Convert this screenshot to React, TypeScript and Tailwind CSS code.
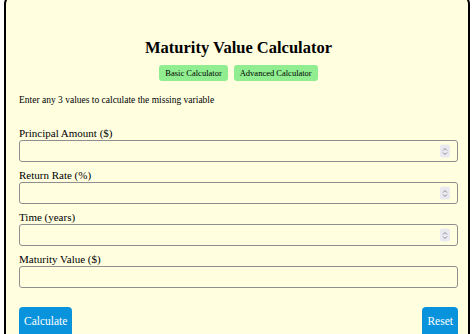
import React from 'react';

function Spinner() {
  return (
    <span className="pointer-events-none absolute right-[8px] top-1/2 flex h-[13px] w-[10px] -translate-y-1/2 items-center justify-center rounded-[2px] bg-[#e9e9ef]">
      <svg width="6" height="10" viewBox="0 0 6 10" fill="none" stroke="#8a8a94" strokeWidth="1">
        <path d="M1 4 L3 2 L5 4" />
        <path d="M1 6 L3 8 L5 6" />
      </svg>
    </span>
  );
}

function Field({ label, spinner = true }: { label: string; spinner?: boolean }) {
  return (
    <div className="flex flex-col">
      <label className="text-[11px] leading-[12px] text-black">{label}</label>
      <div className="relative mt-[1px]">
        <input
          type="text"
          className="block h-[22px] w-full rounded-[3px] border-[1.5px] border-[#8f8f8f] bg-transparent px-2 font-['Liberation_Serif',serif] text-[11px] outline-none"
        />
        {spinner && <Spinner />}
      </div>
    </div>
  );
}

function Pill({ children }: { children: React.ReactNode }) {
  return (
    <button className="h-[16px] rounded-[3px] bg-[#90ee90] px-[6px] font-['Liberation_Serif',serif] text-[8.5px] leading-[16px] text-black">
      {children}
    </button>
  );
}

export default function App() {
  return (
    <div className="h-[334px] w-[474px] overflow-hidden bg-white font-['Liberation_Serif','Times_New_Roman',serif]">
      <div className="ml-[4px] -mt-[6px] h-[360px] w-[466px] rounded-[10px] border-2 border-black bg-[#ffffe0] pl-[13px] pr-[10px] pt-[42px]">
        <h1 className="text-center text-[16.5px] font-bold leading-[20px] text-black">Maturity Value Calculator</h1>
        <div className="mt-[7px] flex justify-center gap-[6px]">
          <Pill>Basic Calculator</Pill>
          <Pill>Advanced Calculator</Pill>
        </div>
        <p className="mt-[13px] text-[9.5px] leading-[12px] text-black">
          Enter any 3 values to calculate the missing variable
        </p>
        <div className="mt-[21px] flex flex-col gap-[7px]">
          <Field label="Principal Amount ($)" />
          <Field label="Return Rate (%)" />
          <Field label="Time (years)" />
          <Field label="Maturity Value ($)" spinner={false} />
        </div>
        <div className="mt-[19px] flex justify-between">
          <button className="h-[30px] rounded-[4px] bg-[#0893dc] px-[5px] font-['Liberation_Serif',serif] text-[11.5px] text-white">
            Calculate
          </button>
          <button className="h-[30px] rounded-[4px] bg-[#0893dc] px-[5px] font-['Liberation_Serif',serif] text-[11.5px] text-white">
            Reset
          </button>
        </div>
      </div>
    </div>
  );
}
